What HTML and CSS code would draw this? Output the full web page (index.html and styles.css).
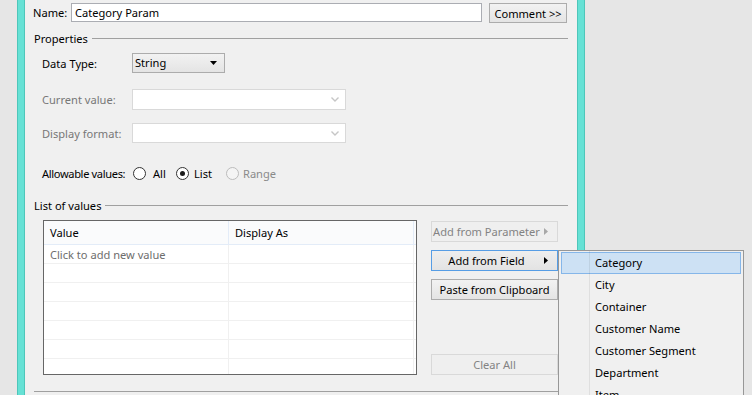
FILE: index.html
```html
<!DOCTYPE html>
<html lang="en">
<head>
  <meta charset="UTF-8">
  <title>Edit Parameter</title>
  <link rel="stylesheet" href="styles.css">
</head>
<body>
  <div class="frame">
    <div class="dialog">
      <div class="name-row">
        <span class="name-label">Name:</span>
        <div class="textbox">Category Param</div>
        <button class="btn comment">Comment &gt;&gt;</button>
      </div>

      <div class="group-title"><span>Properties</span><i></i></div>
      <div class="props">
        <div class="field row-type">
          <span class="lbl">Data Type:</span>
          <div class="select">String
            <svg class="caret" width="7" height="4" viewBox="0 0 7 4"><polygon points="0,0 7,0 3.5,4" fill="#000"/></svg>
          </div>
        </div>
        <div class="field off row-current">
          <span class="lbl">Current value:</span>
          <div class="combo">
            <svg class="chev" width="8" height="5" viewBox="0 0 8 5"><path d="M0.5 0.5 L4 4 L7.5 0.5" fill="none" stroke="#c6c6c6" stroke-width="1.4"/></svg>
          </div>
        </div>
        <div class="field off row-format">
          <span class="lbl">Display format:</span>
          <div class="combo">
            <svg class="chev" width="8" height="5" viewBox="0 0 8 5"><path d="M0.5 0.5 L4 4 L7.5 0.5" fill="none" stroke="#c6c6c6" stroke-width="1.4"/></svg>
          </div>
        </div>
        <div class="field row-allow">
          <span class="lbl tight">Allowable values:</span>
          <div class="radios">
            <span class="radio opt-all"><b></b>All</span>
            <span class="radio opt-list checked"><b></b>List</span>
            <span class="radio opt-range disabled"><b></b>Range</span>
          </div>
        </div>
      </div>

      <div class="group-title list-title"><span>List of values</span><i></i></div>
      <div class="values">
        <div class="grid">
          <div class="grid-head">
            <div class="c1">Value</div><div class="c2">Display As</div><div class="c3"></div>
          </div>
          <div class="grid-row"><div class="c1 hint">Click to add new value</div><div class="c2"></div><div class="c3"></div></div>
          <div class="grid-row"><div class="c1"></div><div class="c2"></div><div class="c3"></div></div>
          <div class="grid-row"><div class="c1"></div><div class="c2"></div><div class="c3"></div></div>
          <div class="grid-row"><div class="c1"></div><div class="c2"></div><div class="c3"></div></div>
          <div class="grid-row"><div class="c1"></div><div class="c2"></div><div class="c3"></div></div>
          <div class="grid-row"><div class="c1"></div><div class="c2"></div><div class="c3"></div></div>
          <div class="grid-row"><div class="c1"></div><div class="c2"></div><div class="c3"></div></div>
        </div>
        <div class="actions">
          <button class="btn disabled sub">Add from Parameter
            <svg class="tri" width="4" height="7" viewBox="0 0 4 7"><polygon points="0,0 4,3.5 0,7" fill="#a8a8a8"/></svg>
          </button>
          <button class="btn focus sub">Add from Field
            <svg class="tri" width="4" height="7" viewBox="0 0 4 7"><polygon points="0,0 4,3.5 0,7" fill="#000"/></svg>
          </button>
          <button class="btn">Paste from Clipboard</button>
          <button class="btn disabled clear">Clear All</button>
        </div>
      </div>
      <div class="bottom-line"></div>
    </div>
  </div>

  <div class="menu">
    <div class="item active">Category</div>
    <div class="item">City</div>
    <div class="item">Container</div>
    <div class="item">Customer Name</div>
    <div class="item">Customer Segment</div>
    <div class="item">Department</div>
    <div class="item">Item</div>
  </div>
</body>
</html>
```

FILE: styles.css
```css
body {
  margin: 0;
  width: 752px;
  height: 395px;
  overflow: hidden;
  position: relative;
  background: #e6e6e6;
  color: #000;
  font-family: "Noto Sans", "Open Sans", sans-serif;
  font-size: 11.1px;
  white-space: nowrap;
}

* {
  box-sizing: border-box;
}

.frame {
  margin-left: 17px;
  width: 568px;
  height: 395px;
  padding: 0 6px;
  background: #66e1d5;
  border-left: 1px solid #4ec6ba;
  border-right: 1px solid #4ec6ba;
}

.dialog {
  height: 100%;
  padding: 3px 9px 0 8px;
  background: #f0f0f0;
  border-left: 1px solid #4ec6ba;
  border-right: 1px solid #4ec6ba;
}

/* name row */
.name-row {
  display: flex;
  align-items: flex-start;
  height: 20px;
}

.name-label {
  width: 38px;
  line-height: 20px;
}

.textbox {
  width: 411px;
  height: 19px;
  padding-left: 3px;
  line-height: 18px;
  background: #fff;
  border: 1px solid #abadb3;
}

.btn {
  position: relative;
  height: 21px;
  padding: 0;
  font-family: inherit;
  font-size: inherit;
  color: #000;
  background: linear-gradient(#f2f2f2, #e4e4e4);
  border: 1px solid #acacac;
  text-align: center;
}

.comment {
  width: 78px;
  height: 20px;
  margin-left: 7px;
}

.btn.disabled {
  color: #838383;
  background: #efefef;
  border-color: #d9d9d9;
}

.btn.focus {
  border-color: #569de5;
  background: linear-gradient(#eeeeee, #e3e3e3);
}

.btn .tri {
  position: absolute;
  right: 9px;
  top: 6px;
}

/* group headings */
.group-title {
  display: flex;
  align-items: center;
  gap: 4px;
  height: 16px;
  margin-top: 7px;
  padding-left: 1px;
}

.group-title i {
  flex: 1;
  height: 1px;
  background: #a0a0a0;
}

.list-title {
  margin-top: 14px;
}

/* properties */
.props {
  padding-left: 9px;
}

.field {
  display: grid;
  grid-template-columns: 90px auto;
  align-items: center;
}

.field.off .lbl {
  color: #777;
}

.lbl.tight {
  letter-spacing: -0.35px;
}

.row-type {
  margin-top: 7px;
  height: 20px;
}

.row-current {
  margin-top: 16px;
  height: 21px;
}

.row-format {
  margin-top: 13px;
  height: 20px;
}

.row-allow {
  margin-top: 20px;
  height: 20px;
}

.select {
  position: relative;
  width: 93px;
  height: 20px;
  padding-left: 2px;
  line-height: 18px;
  background: linear-gradient(#f2f2f2, #e4e4e4);
  border: 1px solid #acacac;
}

.select .caret {
  position: absolute;
  right: 7px;
  top: 7px;
}

.combo {
  position: relative;
  width: 214px;
  height: 100%;
  background: #fff;
  border: 1px solid #d9d9d9;
}

.combo .chev {
  position: absolute;
  right: 6px;
  top: 7px;
}

.radios {
  display: flex;
  align-items: center;
  padding-left: 1px;
}

.radio {
  display: flex;
  align-items: center;
  gap: 7px;
}

.radio b {
  width: 13px;
  height: 13px;
  border: 1px solid #333;
  border-radius: 50%;
  background: #fff;
  position: relative;
}

.opt-all {
  width: 43px;
}

.opt-list {
  width: 50px;
  gap: 5px;
}

.radio.checked b::after {
  content: "";
  position: absolute;
  left: 3px;
  top: 3px;
  width: 5px;
  height: 5px;
  border-radius: 50%;
  background: #1a1a1a;
}

.radio.disabled {
  color: #8a8a8a;
  gap: 4px;
}

.radio.disabled b {
  border-color: #bcbcbc;
  background: #f4f4f4;
}

/* list of values */
.values {
  display: flex;
  margin-top: 7px;
  padding-left: 10px;
  height: 155px;
}

.grid {
  width: 374px;
  height: 155px;
  overflow: hidden;
  background: #fff;
  border: 1px solid #666;
}

.grid-head, .grid-row {
  display: grid;
  grid-template-columns: 185px 185px 2px;
}

.grid-head {
  height: 24px;
  line-height: 23px;
  background: #fafbfc;
  border-bottom: 1px solid #e3ecf8;
}

.grid-head > div {
  padding-left: 6px;
  border-right: 1px solid #e3ecf8;
}

.grid-head .c3 {
  border-right: none;
}

.grid-row {
  height: 19px;
  line-height: 19px;
  border-bottom: 1px solid #f0f0f0;
}

.grid-row > div {
  border-right: 1px solid #f0f0f0;
}

.grid-row .c3 {
  border-right: none;
}

.hint {
  padding-left: 6px;
  color: #6d6d6d;
}

.actions {
  display: flex;
  flex-direction: column;
  gap: 8px;
  width: 127px;
  margin-left: 14px;
  padding-top: 1px;
}

.actions .btn {
  width: 127px;
  flex: none;
}

.actions .sub {
  padding-right: 16px;
}

.actions .clear {
  margin-top: auto;
}

.bottom-line {
  height: 1px;
  margin: 16px 0 0 1px;
  background: #a0a0a0;
}

/* popup menu */
.menu {
  position: absolute;
  left: 558px;
  top: 250px;
  width: 186px;
  height: 160px;
  padding: 1px 2px;
  background: #f0f0f0;
  border: 1px solid #979797;
}

.menu::after {
  content: "";
  position: absolute;
  left: 30px;
  top: 0;
  bottom: 0;
  width: 1px;
  background: rgba(0, 0, 0, 0.07);
}

.item {
  height: 22px;
  padding-left: 33px;
  line-height: 20px;
  border: 1px solid transparent;
}

.item.active {
  background: #cde1f4;
  border-color: #85b6e9;
}
```
